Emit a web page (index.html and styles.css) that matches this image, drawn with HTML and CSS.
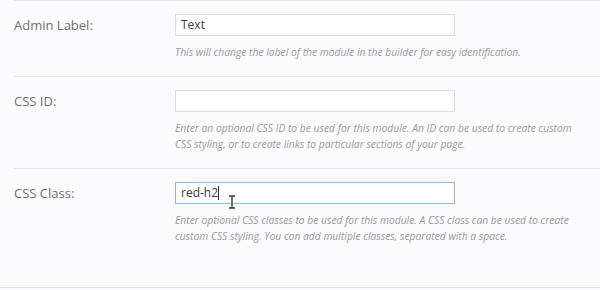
FILE: index.html
```html
<!DOCTYPE html>
<html>
<head>
<meta charset="utf-8">
<link rel="stylesheet" href="styles.css">
</head>
<body>
<div class="panel">
  <div class="row">
    <div class="label">Admin Label:</div>
    <div class="field">
      <div class="input">Text</div>
      <p class="help">This will change the label of the module in the builder for easy identification.</p>
    </div>
  </div>
  <div class="row">
    <div class="label">CSS ID:</div>
    <div class="field">
      <div class="input"></div>
      <p class="help">Enter an optional CSS ID to be used for this module. An ID can be used to create custom CSS styling, or to create links to particular sections of your page.</p>
    </div>
  </div>
  <div class="row last">
    <div class="label">CSS Class:</div>
    <div class="field">
      <div class="input focus">red-h2<span class="caret"></span>
        <svg class="ibeam" width="8" height="14" viewBox="0 0 8 14"><path d="M1 1h6M4 1v12M1 13h6" stroke="#333" stroke-width="1.3" fill="none"/></svg>
      </div>
      <p class="help">Enter optional CSS classes to be used for this module. A CSS class can be used to create custom CSS styling. You can add multiple classes, separated with a space.</p>
    </div>
  </div>
</div>
<div class="footer-line"></div>
</body>
</html>
```
FILE: styles.css
```css
html, body {
  margin: 0;
  padding: 0;
  background: #fcfbfd;
  width: 600px;
  height: 290px;
  overflow: hidden;
  font-family: "Open Sans", "Liberation Sans", sans-serif;
}
.panel {
  margin-left: 14px;
  height: 287px;
  box-sizing: border-box;
}
.row {
  display: flex;
  border-top: 1px solid #ebeaec;
  padding: 13px 0 16px 0;
}
.label {
  width: 161px;
  flex: none;
  font-size: 13px;
  line-height: 22px;
  color: #707070;
}
.field {
  width: 408px;
}
.input {
  position: relative;
  width: 280px;
  height: 22px;
  box-sizing: border-box;
  border: 1px solid #dedede;
  background: #fff;
  font-size: 12px;
  line-height: 20px;
  padding-left: 5px;
  color: #3a3a3a;
}
.input.focus {
  border-color: #8fb8dc;
}
.caret {
  display: inline-block;
  width: 1px;
  height: 14px;
  background: #333;
  vertical-align: -3px;
}
.ibeam {
  position: absolute;
  left: 52px;
  top: 12px;
}
.help {
  margin: 8px 0 0 0;
  font-size: 10.3px;
  line-height: 16px;
  font-style: italic;
  color: #9a9a9a;
}
.footer-line {
  height: 1px;
  background: #e4e3e6;
}
```
